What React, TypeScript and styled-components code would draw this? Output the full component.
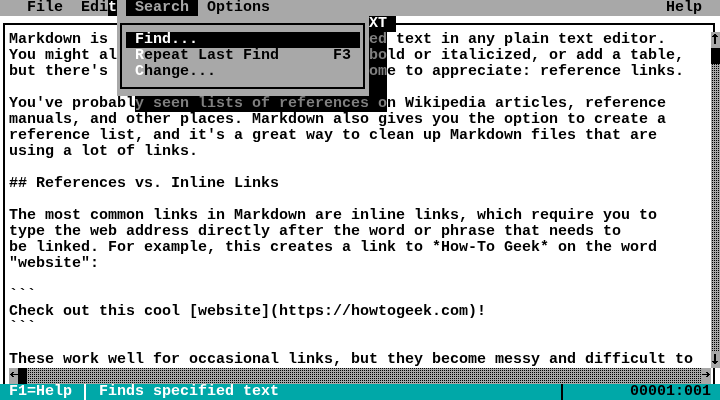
import React from 'react';
import styled, { createGlobalStyle } from 'styled-components';

const GRAY = '#a8a8a8';
const CYAN = '#00a8a8';

const Global = createGlobalStyle`
  html, body { margin: 0; padding: 0; background: #000; }
  body { width: 720px; height: 400px; overflow: hidden; }
`;

const Screen = styled.div`
  position: relative;
  width: 720px;
  height: 400px;
  display: flex;
  flex-direction: column;
  overflow: hidden;
  background: #fff;
  color: #000;
  font-family: "Liberation Mono", "DejaVu Sans Mono", monospace;
  font-size: 15px;
  font-weight: 700;
  line-height: 16px;
  white-space: pre;
`;

/* ---------- menu bar ---------- */
const MenuBar = styled.div`
  height: 16px;
  display: flex;
  background: ${GRAY};
  padding: 0 9px 0 18px;
`;

const MenuTitle = styled.span<{ $active?: boolean }>`
  padding: 0 9px;
  background: ${(p) => (p.$active ? '#000' : 'transparent')};
  color: ${(p) => (p.$active ? GRAY : '#000')};
`;

const HelpTitle = styled(MenuTitle)`
  margin-left: auto;
`;

const Stain = styled.span`
  background: #000;
  color: #fff;
`;

/* ---------- window frame ---------- */
const TopBorder = styled.div`
  height: 16px;
  display: flex;
  padding: 0 5px 0 3px;
`;

const RuleLeft = styled.div`
  width: 366px;
  box-sizing: border-box;
  margin-top: 7px;
  border-top: 2px solid #000;
  border-left: 2px solid #000;
`;

const RuleRight = styled.div`
  flex: 1;
  box-sizing: border-box;
  margin-top: 7px;
  border-top: 2px solid #000;
  border-right: 2px solid #000;
`;

const Title = styled.span`
  height: 16px;
  background: #000;
  color: #fff;
`;

const Body = styled.div`
  flex: 1;
  min-height: 0;
  display: flex;
`;

const Edge = styled.div<{ $side: 'left' | 'right' }>`
  box-sizing: border-box;
  width: ${(p) => (p.$side === 'left' ? '6px' : '7px')};
  margin-left: ${(p) => (p.$side === 'left' ? '3px' : '2px')};
  border-left: 2px solid #000;
`;

const TextArea = styled.div`
  flex: 1;
  min-width: 0;
  display: flex;
  flex-direction: column;
  overflow: hidden;
`;

const Line = styled.div`
  height: 16px;
  display: flex;
  overflow: hidden;
`;

/* the stretch of a line that lies under the open pull-down menu */
const Covered = styled.span<{ $cols: number }>`
  flex: none;
  width: ${(p) => p.$cols * 9}px;
`;

/* ---------- scroll bars ---------- */
const VScroll = styled.div`
  width: 9px;
  display: flex;
  flex-direction: column;
  background: ${GRAY};
`;

const HRow = styled.div`
  height: 16px;
  display: flex;
`;

const HScroll = styled.div`
  flex: 1;
  display: flex;
  background: ${GRAY};
`;

const ArrowCell = styled.div`
  width: 9px;
  height: 16px;
  flex: none;
  background: ${GRAY};
  svg {
    display: block;
  }
`;

const Thumb = styled.div`
  width: 9px;
  height: 16px;
  flex: none;
  background: #000;
`;

const Track = styled.div`
  flex: 1;
  background-color: ${GRAY};
  background-image: conic-gradient(#000 0 25%, transparent 0 100%);
  background-size: 2px 2px;
`;

type Dir = 'up' | 'down' | 'left' | 'right';

const arrowPaths: Record<Dir, string> = {
  up: 'M3 2h2v1h1v1h1v1h-2v7h-2v-7h-2v-1h1v-1h1z',
  down: 'M3 2h2v7h2v1h-1v1h-1v1h-2v-1h-1v-1h-1v-1h2z',
  right: 'M4 4h2v1h1v1h1v1h-1v1h-1v1h-2v-1h1v-1h-5v-1h5v-1h-1z',
  left: 'M3 4h2v1h-1v1h5v1h-5v1h1v1h-2v-1h-1v-1h-1v-1h1v-1h1z',
};

function Arrow({ dir }: { dir: Dir }) {
  return (
    <ArrowCell>
      <svg width="9" height="16" viewBox="0 0 9 16" shapeRendering="crispEdges">
        <path d={arrowPaths[dir]} fill="#000" />
      </svg>
    </ArrowCell>
  );
}

/* ---------- status bar ---------- */
const StatusBar = styled.div`
  height: 16px;
  display: flex;
  background: ${CYAN};
  color: #fff;
  padding-left: 9px;
`;

const StatusKey = styled.span`
  width: 72px;
`;

const StatusRule = styled.div<{ $color: string }>`
  box-sizing: border-box;
  width: 6px;
  margin-left: 3px;
  border-left: 2px solid ${(p) => p.$color};
`;

const StatusMessage = styled.span`
  flex: 1;
  padding-left: 9px;
`;

const StatusPos = styled.span`
  width: 153px;
  box-sizing: border-box;
  padding-right: 9px;
  text-align: right;
  color: #000;
`;

/* ---------- pull-down menu ---------- */
const Dropdown = styled.div`
  position: absolute;
  left: 117px;
  top: 16px;
  width: 252px;
  height: 80px;
`;

const Panel = styled.div`
  width: 100%;
  height: 100%;
  box-sizing: border-box;
  padding: 7px 4px 7px 3px;
  background: ${GRAY};
`;

const PanelFrame = styled.div`
  height: 100%;
  box-sizing: border-box;
  border: 2px solid #000;
  padding: 7px 3px 0 4px;
`;

const Entry = styled.div<{ $active?: boolean }>`
  height: 16px;
  display: flex;
  padding: 0 9px;
  background: ${(p) => (p.$active ? '#000' : 'transparent')};
  color: ${(p) => (p.$active ? '#fff' : '#000')};
`;

const Hotkey = styled.span`
  color: #fff;
`;

const Shortcut = styled.span`
  margin-left: auto;
`;

const ShadeInvert = styled.div<{ $right?: boolean }>`
  position: absolute;
  background: #fff;
  mix-blend-mode: difference;
  ${(p) =>
    p.$right
      ? 'left: 252px; top: 16px; width: 18px; height: 64px;'
      : 'left: 18px; top: 80px; width: 252px; height: 16px;'}
`;

const ShadeDim = styled(ShadeInvert)`
  background: #808080;
  mix-blend-mode: multiply;
`;

/* [visible start, visible rest] – columns 13-40 of the first lines are under the menu */
const lines: [string, string?][] = [
  ['Markdown is ', 'ed text in any plain text editor.'],
  ['You might al', 'bold or italicized, or add a table,'],
  ["but there's ", 'ome to appreciate: reference links.'],
  [''],
  ["You've probably seen lists of references on Wikipedia articles, reference"],
  ['manuals, and other places. Markdown also gives you the option to create a'],
  ["reference list, and it's a great way to clean up Markdown files that are"],
  ['using a lot of links.'],
  [''],
  ['## References vs. Inline Links'],
  [''],
  ['The most common links in Markdown are inline links, which require you to'],
  ['type the web address directly after the word or phrase that needs to'],
  ['be linked. For example, this creates a link to *How-To Geek* on the word'],
  ['"website":'],
  [''],
  ['```'],
  ['Check out this cool [website](https://howtogeek.com)!'],
  ['```'],
  [''],
  ['These work well for occasional links, but they become messy and difficult to'],
];

export default function App() {
  return (
    <>
      <Global />
      <Screen>
        <MenuBar>
          <MenuTitle>File</MenuTitle>
          <MenuTitle>
            Edi<Stain>t</Stain>
          </MenuTitle>
          <MenuTitle $active>Search</MenuTitle>
          <MenuTitle>Options</MenuTitle>
          <HelpTitle>Help</HelpTitle>
        </MenuBar>

        <TopBorder>
          <RuleLeft />
          <Title>XT </Title>
          <RuleRight />
        </TopBorder>

        <Body>
          <Edge $side="left" />
          <TextArea>
            {lines.map(([start, rest], i) => (
              <Line key={i}>
                <span>{start}</span>
                {rest !== undefined && (
                  <>
                    <Covered $cols={28} />
                    <span>{rest}</span>
                  </>
                )}
              </Line>
            ))}
          </TextArea>
          <VScroll>
            <Arrow dir="up" />
            <Thumb />
            <Track />
            <Arrow dir="down" />
          </VScroll>
        </Body>

        <HRow>
          <Edge $side="left" />
          <HScroll>
            <Arrow dir="left" />
            <Thumb />
            <Track />
            <Arrow dir="right" />
          </HScroll>
          <Edge $side="right" />
        </HRow>

        <StatusBar>
          <StatusKey>F1=Help</StatusKey>
          <StatusRule $color="#fff" />
          <StatusMessage>Finds specified text</StatusMessage>
          <StatusRule $color="#000" />
          <StatusPos>00001:001</StatusPos>
        </StatusBar>

        <Dropdown>
          <Panel>
            <PanelFrame>
              <Entry $active>
                <Hotkey>F</Hotkey>ind...
              </Entry>
              <Entry>
                <Hotkey>R</Hotkey>epeat Last Find
                <Shortcut>F3</Shortcut>
              </Entry>
              <Entry>
                <Hotkey>C</Hotkey>hange...
              </Entry>
            </PanelFrame>
          </Panel>
          <ShadeInvert $right />
          <ShadeDim $right />
          <ShadeInvert />
          <ShadeDim />
        </Dropdown>
      </Screen>
    </>
  );
}
